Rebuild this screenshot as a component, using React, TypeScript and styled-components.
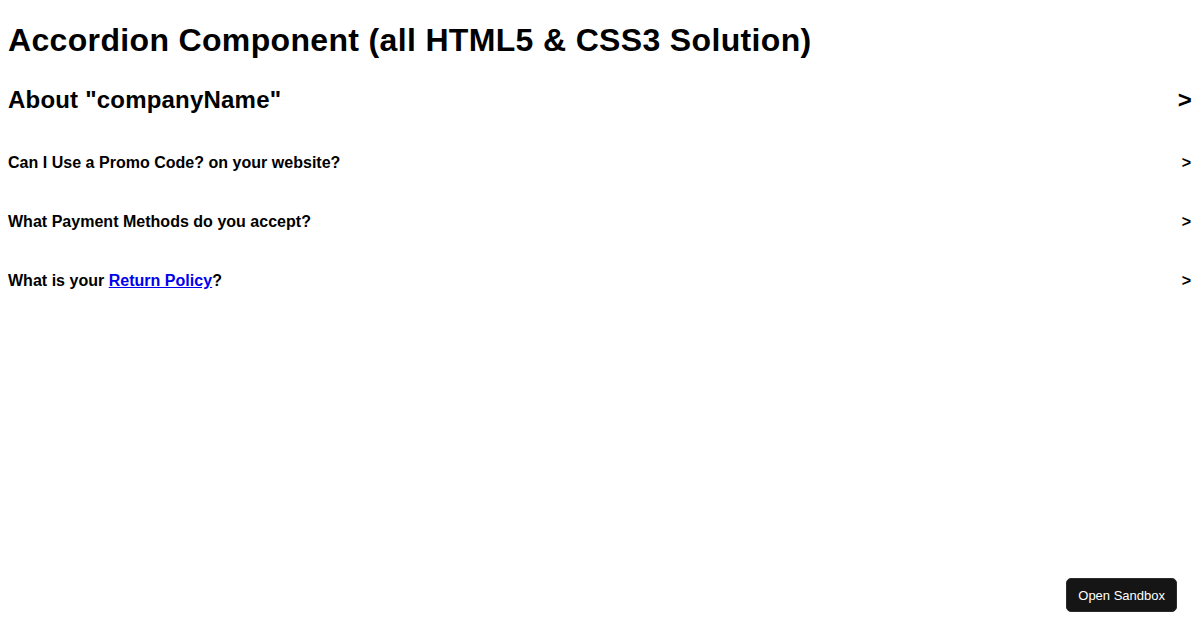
import React from "react";
import styled, { createGlobalStyle } from "styled-components";

const GlobalStyle = createGlobalStyle`
  html, body { margin: 0; padding: 0; background: #fff; }
  body {
    margin: 8px;
    font-family: "Liberation Sans", Arial, sans-serif;
    color: #000;
  }
`;

const Title = styled.h1`
  font-size: 32px;
  font-weight: bold;
  margin: 14px 0 0;
  line-height: 36.8px;
  letter-spacing: 0.34px;
`;

const Accordion = styled.div`
  display: flex;
  flex-direction: column;
  gap: 40.6px;
  margin-top: 27px;
`;

const Item = styled.div<{ $big?: boolean }>`
  display: flex;
  justify-content: space-between;
  align-items: center;
  font-weight: bold;
  font-size: ${(p) => (p.$big ? "24px" : "16px")};
  line-height: ${(p) => (p.$big ? "27.6px" : "18.4px")};
  letter-spacing: ${(p) => (p.$big ? "0.2px" : "0.02px")};
  cursor: pointer;
`;

const Heading = styled.span``;

const Chevron = styled.span<{ $big?: boolean }>`
  font-weight: bold;
  padding-right: ${(p) => (p.$big ? "0" : "1px")};
`;

const Link = styled.a`
  color: #0000ee;
  text-decoration: underline;
`;

const SandboxButton = styled.button`
  position: fixed;
  right: 23px;
  bottom: 18px;
  height: 34px;
  padding: 0 11px;
  background: #151515;
  color: #fff;
  border: 1px solid #2a2a2a;
  border-radius: 5px;
  font-family: "Liberation Sans", Arial, sans-serif;
  font-size: 13px;
  cursor: pointer;
`;

export default function App() {
  return (
    <>
      <GlobalStyle />
      <Title>Accordion Component (all HTML5 &amp; CSS3 Solution)</Title>
      <Accordion>
        <Item $big>
          <Heading>About "companyName"</Heading>
          <Chevron $big>&gt;</Chevron>
        </Item>
        <Item>
          <Heading>Can I Use a Promo Code? on your website?</Heading>
          <Chevron>&gt;</Chevron>
        </Item>
        <Item>
          <Heading>What Payment Methods do you accept?</Heading>
          <Chevron>&gt;</Chevron>
        </Item>
        <Item>
          <Heading>
            What is your <Link href="#">Return Policy</Link>?
          </Heading>
          <Chevron>&gt;</Chevron>
        </Item>
      </Accordion>
      <SandboxButton>Open Sandbox</SandboxButton>
    </>
  );
}
